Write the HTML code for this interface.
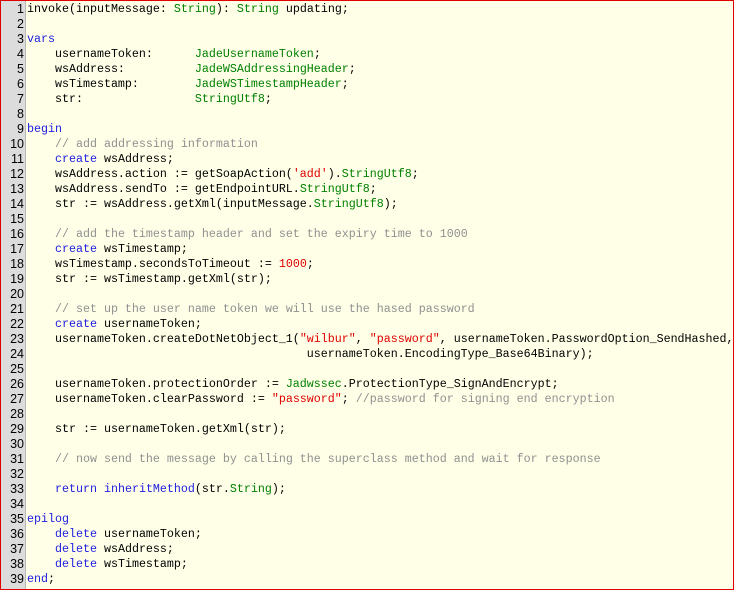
<!DOCTYPE html>
<html><head><style>
html,body{margin:0;padding:0}
body{width:734px;height:590px;overflow:hidden;background:#fff}
.box{position:absolute;left:0;top:0;width:732px;height:588px;border:1px solid #e00000;background:#ffffe8;overflow:hidden}
.gut{position:absolute;left:0;top:0;width:24px;height:588px;background:#dcdcdc;border-right:1px solid #b8b8b8}
pre{margin:0;position:absolute;top:1px;font-family:"Liberation Mono",monospace;font-size:11.67px;line-height:15px;color:#000}
.n{left:0;width:23px;text-align:right;color:#000;font-family:"Liberation Sans",sans-serif;font-size:12.5px}
.c{left:26px}
.k{color:#2020e0}.t{color:#008000}.s{color:#e00000}.m{color:#909090}
</style></head><body><div class="box"><div class="gut"></div>
<pre class="n">1
2
3
4
5
6
7
8
9
10
11
12
13
14
15
16
17
18
19
20
21
22
23
24
25
26
27
28
29
30
31
32
33
34
35
36
37
38
39</pre>
<pre class="c">invoke(inputMessage: <span class="t">String</span>): <span class="t">String</span> updating;

<span class="k">vars</span>
    usernameToken:      <span class="t">JadeUsernameToken</span>;
    wsAddress:          <span class="t">JadeWSAddressingHeader</span>;
    wsTimestamp:        <span class="t">JadeWSTimestampHeader</span>;
    str:                <span class="t">StringUtf8</span>;

<span class="k">begin</span>
    <span class="m">// add addressing information</span>
    <span class="k">create</span> wsAddress;
    wsAddress.action := getSoapAction(<span class="s">'add'</span>).<span class="t">StringUtf8</span>;
    wsAddress.sendTo := getEndpointURL.<span class="t">StringUtf8</span>;
    str := wsAddress.getXml(inputMessage.<span class="t">StringUtf8</span>);

    <span class="m">// add the timestamp header and set the expiry time to 1000</span>
    <span class="k">create</span> wsTimestamp;
    wsTimestamp.secondsToTimeout := <span class="s">1000</span>;
    str := wsTimestamp.getXml(str);

    <span class="m">// set up the user name token we will use the hased password</span>
    <span class="k">create</span> usernameToken;
    usernameToken.createDotNetObject_1(<span class="s">"wilbur"</span>, <span class="s">"password"</span>, usernameToken.PasswordOption_SendHashed,
                                        usernameToken.EncodingType_Base64Binary);

    usernameToken.protectionOrder := <span class="t">Jadwssec</span>.ProtectionType_SignAndEncrypt;
    usernameToken.clearPassword := <span class="s">"password"</span>; <span class="m">//password for signing end encryption</span>

    str := usernameToken.getXml(str);

    <span class="m">// now send the message by calling the superclass method and wait for response</span>

    <span class="k">return</span> <span class="k">inheritMethod</span>(str.<span class="t">String</span>);

<span class="k">epilog</span>
    <span class="k">delete</span> usernameToken;
    <span class="k">delete</span> wsAddress;
    <span class="k">delete</span> wsTimestamp;
<span class="k">end</span>;</pre>
</div></body></html>
